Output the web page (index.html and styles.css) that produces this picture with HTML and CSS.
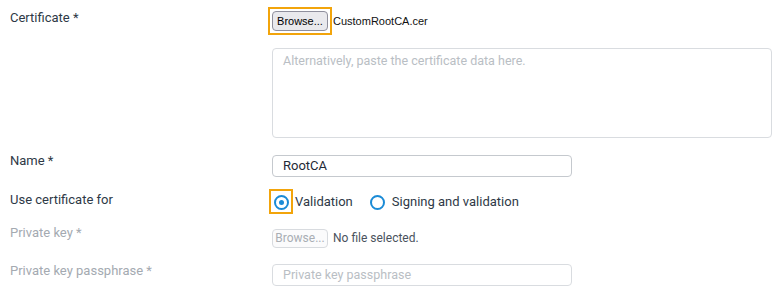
FILE: index.html
```html
<!DOCTYPE html>
<html>
<head>
<meta charset="utf-8">
<link rel="stylesheet" href="styles.css">
</head>
<body>
<div class="form">
  <div class="row row-cert">
    <div class="label">Certificate *</div>
    <div class="control">
      <div class="file">
        <span class="ring"><span class="btn">Browse...</span></span>
        <span class="filename">CustomRootCA.cer</span>
      </div>
      <div class="textarea"><span class="placeholder">Alternatively, paste the certificate data here.</span></div>
    </div>
  </div>
  <div class="row row-name">
    <div class="label lift2">Name *</div>
    <div class="control">
      <div class="input">RootCA</div>
    </div>
  </div>
  <div class="row row-use">
    <div class="label">Use certificate for</div>
    <div class="control radios">
      <span class="radio"><span class="rbox focus"><span class="circle checked"></span></span><span class="rtext">Validation</span></span>
      <span class="radio second"><span class="rbox"><span class="circle"></span></span><span class="rtext">Signing and validation</span></span>
    </div>
  </div>
  <div class="row row-key">
    <div class="label disabled lift2">Private key *</div>
    <div class="control">
      <div class="file">
        <span class="btn btn-disabled">Browse...</span>
        <span class="nofile">No file selected.</span>
      </div>
    </div>
  </div>
  <div class="row row-pass">
    <div class="label disabled lift1">Private key passphrase *</div>
    <div class="control">
      <div class="input"><span class="placeholder">Private key passphrase</span></div>
    </div>
  </div>
</div>
</body>
</html>
```
FILE: styles.css
```css
html, body {
  margin: 0;
  padding: 0;
  background: #ffffff;
}
body {
  font-family: Roboto, "Liberation Sans", sans-serif;
  font-size: 13px;
  line-height: 16px;
  color: #2e3946;
}
.form {
  padding-left: 10px;
}
.row {
  display: grid;
  grid-template-columns: 262px 1fr;
  align-items: start;
}
.label {
  color: #2e3946;
}
.label.disabled {
  color: #a4aab1;
}
.lift1 { margin-top: -1px; }
.lift2 { margin-top: -2px; }

.row-cert { margin-top: 10px; }
.row-name { margin-top: 17px; }
.row-use { margin-top: 15px; }
.row-key { margin-top: 16px; }
.row-pass { margin-top: 15px; }

.file {
  display: flex;
  align-items: center;
  height: 22px;
}
.ring {
  display: flex;
  margin: -4px 0 -4px -4px;
  padding: 2px;
  border: 2px solid #f2a40b;
}
.btn {
  box-sizing: border-box;
  width: 56px;
  height: 20px;
  display: flex;
  align-items: center;
  justify-content: center;
  font-family: "Liberation Sans", Arial, sans-serif;
  font-size: 11px;
  color: #000;
  background: #e9e9ed;
  border: 1px solid #8f8f9d;
  border-radius: 4px;
}
.btn-disabled {
  font-family: Roboto, sans-serif;
  font-size: 12px;
  color: #a9aeb4;
  background: #fbfbfc;
  border-color: #d8dbdf;
  height: 19px;
}
.focus {
  outline: 2px solid #f2a40b;
  outline-offset: 1px;
}
.filename {
  margin-left: 1px;
  font-family: "Liberation Sans", Arial, sans-serif;
  font-size: 11px;
  color: #111;
}
.nofile {
  margin-left: 5px;
  font-size: 12px;
  color: #4a525d;
}
.textarea {
  box-sizing: border-box;
  margin-top: 16px;
  width: 500px;
  height: 90px;
  border: 1px solid #d9dce0;
  border-radius: 4px;
  padding: 4px 10px;
}
.placeholder {
  color: #b9bec4;
  font-size: 12.5px;
}
.input {
  box-sizing: border-box;
  width: 300px;
  height: 22px;
  border: 1px solid #c5c9ce;
  border-radius: 4px;
  padding: 0 10px;
  display: flex;
  align-items: center;
  color: #1f2a36;
}
.row-pass .input {
  border-color: #d9dce0;
}
.radios {
  display: flex;
  align-items: center;
  height: 19px;
}
.radio {
  display: inline-flex;
  align-items: center;
}
.radio.second {
  margin-left: 16px;
}
.rbox {
  box-sizing: border-box;
  width: 18px;
  height: 19px;
  display: flex;
  align-items: center;
  justify-content: center;
  padding-top: 1px;
}
.circle {
  box-sizing: border-box;
  width: 15px;
  height: 15px;
  border: 2px solid #1b8bd6;
  border-radius: 50%;
  display: flex;
  align-items: center;
  justify-content: center;
}
.circle.checked::after {
  content: "";
  width: 5px;
  height: 5px;
  border-radius: 50%;
  background: #1b8bd6;
}
.rtext {
  margin-left: 5px;
  color: #2e3946;
}
```
